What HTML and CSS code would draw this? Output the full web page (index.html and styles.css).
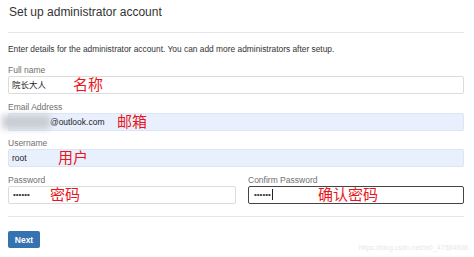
FILE: index.html
```html
<!DOCTYPE html>
<html lang="zh-CN">
<head>
    <meta charset="UTF-8">
    <meta name="viewport" content="width=device-width, initial-scale=1.0">
    <link rel="stylesheet" href="styles.css">
    <title>Set up administrator account</title>
</head>
<body>
    <div class="contenedor">
        <h1>Set up administrator account</h1>
        <p class="intro">Enter details for the administrator account. You can add more administrators after setup.</p>

        <form class="campos">
            <div class="campo">
                <label>Full name</label>
                <div class="caja">院长大人<span class="nota nota-nombre">名称</span></div>
            </div>
            <div class="campo">
                <label>Email Address</label>
                <div class="caja relleno"><span class="borroso"></span>@outlook.com<span class="nota nota-email">邮箱</span></div>
            </div>
            <div class="campo">
                <label>Username</label>
                <div class="caja relleno">root<span class="nota nota-user">用户</span></div>
            </div>
            <div class="fila">
                <div class="campo">
                    <label>Password</label>
                    <div class="caja"><span class="puntos">••••••</span><span class="nota nota-pass">密码</span></div>
                </div>
                <div class="campo">
                    <label>Confirm Password</label>
                    <div class="caja activa"><span class="puntos">••••••</span><span class="cursor"></span><span class="nota nota-conf">确认密码</span></div>
                </div>
            </div>
        </form>

        <div class="opciones">
            <button class="btn">Next</button>
        </div>
        <div class="marca">https://blog.csdn.net/m0_47584908</div>
    </div>
</body>
</html>
```

FILE: styles.css
```css
* {
    margin: 0;
    padding: 0;
    box-sizing: border-box;
    font-family: 'Liberation Sans', Arial, 'Noto Sans CJK SC', sans-serif;
}
body {
    background: #fff;
    color: #333;
}
.contenedor {
    position: relative;
    width: 474px;
    height: 257px;
    padding: 0 10px 0 8px;
}
h1 {
    font-size: 12px;
    font-weight: normal;
    color: #333;
    line-height: 16px;
    padding: 4px 0 12px 1px;
    border-bottom: 1px solid #e6e6e6;
}
.intro {
    font-size: 8.4px;
    line-height: 12px;
    margin-top: 10px;
    color: #333;
}
.campos {
    margin-top: 9px;
    display: flex;
    flex-direction: column;
    gap: 6.5px;
    padding-bottom: 12px;
    border-bottom: 1px solid #e6e6e6;
}
.campo {
    display: flex;
    flex-direction: column;
}
.campo label {
    font-size: 8.5px;
    line-height: 12px;
    color: #707070;
}
.fila {
    display: grid;
    grid-template-columns: 228px 216px;
    column-gap: 12px;
}
.caja {
    position: relative;
    height: 18px;
    border: 1px solid #dcdcdc;
    border-radius: 2px;
    background: #fff;
    font-size: 8.5px;
    line-height: 16px;
    padding-left: 3px;
    color: #222;
    display: flex;
    align-items: center;
}
.relleno {
    background: #e8f0fe;
    border-color: #dde5f2;
}
.activa {
    border: 1.5px solid #444;
    padding-left: 4px;
}
.borroso {
    display: inline-block;
    width: 48px;
    height: 14px;
    margin-left: -10px;
    background: #c9cdd3;
    filter: blur(3px);
}
.puntos {
    font-size: 8px;
    line-height: 10px;
    color: #333;
    padding-left: 1px;
}
.cursor {
    display: inline-block;
    width: 1px;
    height: 11px;
    background: #222;
    margin-left: 1px;
}
.nota {
    position: absolute;
    top: -3px;
    color: #e8151b;
    font-size: 15px;
    line-height: 20px;
    font-family: 'Noto Sans CJK SC', sans-serif;
}
.nota-nombre { left: 64px; }
.nota-email { left: 108px; }
.nota-user { left: 49px; }
.nota-pass { left: 41px; }
.nota-conf { left: 69px; }
.opciones {
    padding-top: 12px;
}
.btn {
    width: 32px;
    height: 17px;
    border: none;
    border-radius: 2px;
    background: #3572b0;
    color: #fff;
    font-weight: bold;
    font-size: 8.5px;
}
.marca {
    position: absolute;
    right: 6px;
    bottom: 6px;
    font-size: 7px;
    color: #e8e8e8;
}
```
